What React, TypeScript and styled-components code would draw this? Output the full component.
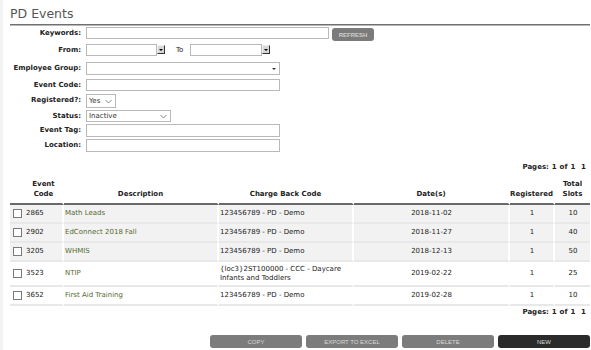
import React from 'react';
import styled, { createGlobalStyle } from 'styled-components';

const GlobalStyle = createGlobalStyle`
  html, body {
    margin: 0;
    padding: 0;
    background: #f3f3f3;
  }
  body {
    font-family: "DejaVu Sans", Verdana, sans-serif;
    font-size: 7px;
    color: #222;
  }
`;

const Page = styled.div`
  margin-left: 3px;
  height: 350px;
  background: #fff;
  padding: 0 1px 0 7px;
  box-sizing: border-box;
`;

const Header = styled.div`
  height: 24px;
  border-bottom: 1px solid #6f6f6f;
  box-shadow: 0 1px 0 #b8b8b8;
  display: flex;
  align-items: flex-end;
`;

const Title = styled.h1`
  margin: 0 0 3px;
  font-size: 12.5px;
  font-weight: normal;
  color: #555;
`;

const Form = styled.div`
  display: flex;
  flex-direction: column;
  padding-top: 2px;
`;

const FieldRow = styled.div<{ $h: number }>`
  display: flex;
  align-items: flex-start;
  height: ${(p) => p.$h}px;
`;

const Label = styled.div`
  width: 71px;
  text-align: right;
  font-weight: bold;
  padding-right: 5px;
  line-height: 12px;
  white-space: nowrap;
`;

const TextBox = styled.div<{ $w: number; $h?: number }>`
  width: ${(p) => p.$w}px;
  height: ${(p) => p.$h ?? 12}px;
  box-sizing: border-box;
  border: 1px solid #b9b9b9;
  background: #fff;
`;

const DateBtn = styled.div`
  width: 8px;
  height: 9px;
  margin-top: 1px;
  box-sizing: border-box;
  border: 1px solid;
  border-color: #eee #333 #333 #eee;
  background: #d8d8d8;
  display: flex;
  align-items: center;
  justify-content: center;
  &::after {
    content: '';
    border-left: 2px solid transparent;
    border-right: 2px solid transparent;
    border-top: 2px solid #000;
  }
`;

const ToLabel = styled.span`
  margin: 0 7px 0 11px;
  line-height: 12px;
`;

const Select = styled.div<{ $w: number; $h?: number }>`
  width: ${(p) => p.$w}px;
  height: ${(p) => p.$h ?? 13}px;
  box-sizing: border-box;
  border: 1px solid #b9b9b9;
  background: #fff;
  display: flex;
  align-items: center;
  justify-content: space-between;
  padding: 0 3px 0 2px;
  font-size: 7px;
  color: #333;
`;

const SolidCaret = styled.span`
  border-left: 2px solid transparent;
  border-right: 2px solid transparent;
  border-top: 2px solid #333;
`;

const Chevron = styled.svg`
  width: 7px;
  height: 5px;
`;

const RefreshButton = styled.button`
  margin: 1px 0 0 3px;
  width: 42px;
  height: 13px;
  padding: 0;
  border: none;
  border-radius: 3px;
  background: #7b7b7b;
  color: #cfcfcf;
  font-family: "Liberation Sans", Arial, sans-serif;
  font-size: 6px;
  font-weight: bold;
`;

const Pages = styled.div<{ $top: number }>`
  margin-top: ${(p) => p.$top}px;
  text-align: right;
  font-weight: bold;
  padding-right: 4px;
  line-height: 9px;
  word-spacing: 0.5px;
`;

const Table = styled.table`
  width: 580px;
  margin-top: 8px;
  border-collapse: separate;
  border-spacing: 0;
  table-layout: fixed;
`;

const Th = styled.th<{ $w: number; $last?: boolean }>`
  width: ${(p) => p.$w}px;
  font-weight: bold;
  text-align: center;
  vertical-align: bottom;
  padding: 0 0 4px;
  line-height: 9.5px;
  border-bottom: 2px solid #6a6a6a;
  border-right: ${(p) => (p.$last ? 'none' : '2px solid #fff')};
`;

const Tr = styled.tr<{ $shade: boolean }>`
  background: ${(p) => (p.$shade ? '#f2f2f2' : '#fff')};
`;

const Td = styled.td<{ $align?: string; $gap?: boolean; $h: number }>`
  height: ${(p) => p.$h}px;
  padding: 0 0 0 1px;
  text-align: ${(p) => p.$align ?? 'left'};
  vertical-align: middle;
  line-height: 8.5px;
  border-bottom: 2px solid #e8e8e8;
  border-right: ${(p) => (p.$gap ? '2px solid #fff' : 'none')};
`;

const CheckBox = styled.span`
  display: block;
  width: 9px;
  height: 9px;
  margin-left: 2px;
  box-sizing: border-box;
  border: 1px solid #7a7a7a;
  background: #fff;
`;

const Link = styled.span`
  color: #56692f;
`;

const ButtonBar = styled.div`
  display: flex;
  justify-content: flex-end;
  gap: 4px;
  margin-top: 18px;
`;

const ActionButton = styled.button<{ $dark?: boolean }>`
  width: 92px;
  height: 13px;
  padding: 0;
  border: none;
  border-radius: 3px;
  background: ${(p) => (p.$dark ? '#2b2b2b' : '#7c7c7c')};
  color: #d8d8d8;
  font-family: "Liberation Sans", Arial, sans-serif;
  font-size: 6px;
`;

const rows = [
  { code: '2865', desc: 'Math Leads', charge: '123456789 - PD - Demo', date: '2018-11-02', reg: '1', slots: '10', shade: true },
  { code: '2902', desc: 'EdConnect 2018 Fall', charge: '123456789 - PD - Demo', date: '2018-11-27', reg: '1', slots: '40', shade: true },
  { code: '3205', desc: 'WHMIS', charge: '123456789 - PD - Demo', date: '2018-12-13', reg: '1', slots: '50', shade: true },
  { code: '3523', desc: 'NTIP', charge: '{loc3}2ST100000 - CCC - Daycare Infants and Toddlers', date: '2019-02-22', reg: '1', slots: '25', shade: false },
  { code: '3652', desc: 'First Aid Training', charge: '123456789 - PD - Demo', date: '2019-02-28', reg: '1', slots: '10', shade: false },
];

const ChevronIcon = () => (
  <Chevron viewBox="0 0 7 5">
    <path d="M0.5 1 L3.5 4 L6.5 1" fill="none" stroke="#666" strokeWidth="0.8" />
  </Chevron>
);

const App: React.FC = () => (
  <Page>
    <GlobalStyle />
    <Header>
      <Title>PD Events</Title>
    </Header>
    <Form>
      <FieldRow $h={17}>
        <Label>Keywords:</Label>
        <TextBox $w={243} />
        <RefreshButton>REFRESH</RefreshButton>
      </FieldRow>
      <FieldRow $h={18}>
        <Label>From:</Label>
        <TextBox $w={71} />
        <DateBtn />
        <ToLabel>To</ToLabel>
        <TextBox $w={72} />
        <DateBtn />
      </FieldRow>
      <FieldRow $h={17}>
        <Label>Employee Group:</Label>
        <Select $w={194}>
          <span />
          <SolidCaret />
        </Select>
      </FieldRow>
      <FieldRow $h={15}>
        <Label>Event Code:</Label>
        <TextBox $w={194} />
      </FieldRow>
      <FieldRow $h={16}>
        <Label>Registered?:</Label>
        <Select $w={30} $h={14}>
          <span>Yes</span>
          <ChevronIcon />
        </Select>
      </FieldRow>
      <FieldRow $h={14}>
        <Label>Status:</Label>
        <Select $w={85} $h={12}>
          <span>Inactive</span>
          <ChevronIcon />
        </Select>
      </FieldRow>
      <FieldRow $h={15}>
        <Label>Event Tag:</Label>
        <TextBox $w={194} $h={13} />
      </FieldRow>
      <FieldRow $h={14}>
        <Label>Location:</Label>
        <TextBox $w={194} $h={13} />
      </FieldRow>
    </Form>
    <Pages $top={10}>Pages: 1 of 1 &nbsp;1</Pages>
    <Table>
      <thead>
        <tr>
          <Th $w={15} style={{ borderRight: 'none' }} />
          <Th $w={37}>
            Event
            <br />
            Code
          </Th>
          <Th $w={153}>Description</Th>
          <Th $w={133}>Charge Back Code</Th>
          <Th $w={154}>Date(s)</Th>
          <Th $w={43}>Registered</Th>
          <Th $w={35} $last>
            Total
            <br />
            Slots
          </Th>
        </tr>
      </thead>
      <tbody>
        {rows.map((r) => {
          const h = r.code === '3523' ? 23 : 17;
          return (
            <Tr key={r.code} $shade={r.shade}>
              <Td $h={h}>
                <CheckBox />
              </Td>
              <Td $h={h} $gap>
                {r.code}
              </Td>
              <Td $h={h} $gap>
                <Link>{r.desc}</Link>
              </Td>
              <Td $h={h} $gap>
                {r.charge}
              </Td>
              <Td $h={h} $gap $align="center">
                {r.date}
              </Td>
              <Td $h={h} $gap $align="center">
                {r.reg}
              </Td>
              <Td $h={h} $align="center">
                {r.slots}
              </Td>
            </Tr>
          );
        })}
      </tbody>
    </Table>
    <Pages $top={2}>Pages: 1 of 1 &nbsp;1</Pages>
    <ButtonBar>
      <ActionButton>COPY</ActionButton>
      <ActionButton>EXPORT TO EXCEL</ActionButton>
      <ActionButton>DELETE</ActionButton>
      <ActionButton $dark>NEW</ActionButton>
    </ButtonBar>
  </Page>
);

export default App;
